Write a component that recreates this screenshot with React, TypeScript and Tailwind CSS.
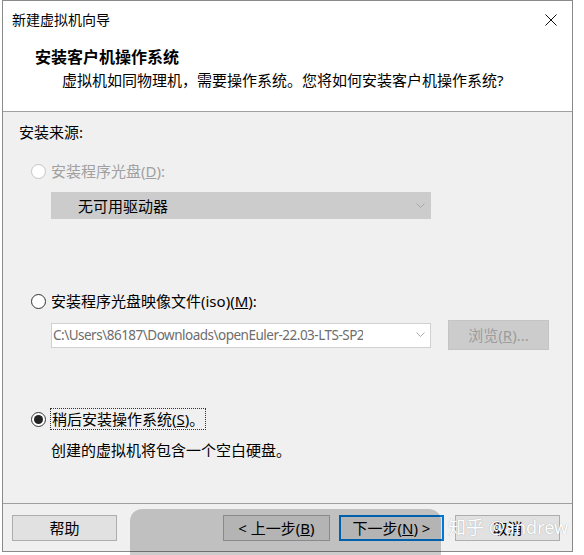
import React from 'react';

const font = { fontFamily: '"Noto Sans", "Noto Sans CJK SC", sans-serif' };

function Radio({ checked = false, disabled = false }: { checked?: boolean; disabled?: boolean }) {
    return (
        <span
            className={`flex h-[15px] w-[15px] shrink-0 items-center justify-center rounded-full border bg-white ${
                disabled ? 'border-[#c4c4c4]' : 'border-[#333333]'
            }`}
        >
            {checked && <span className="h-[9px] w-[9px] rounded-full bg-[#222222]" />}
        </span>
    );
}

function Chevron() {
    return (
        <svg width="9" height="6" viewBox="0 0 9 6" className="shrink-0">
            <polyline points="0.5,0.5 4.5,4.5 8.5,0.5" fill="none" stroke="#a8a8a8" strokeWidth="1" />
        </svg>
    );
}

function Button({ children, focused = false, width }: { children: React.ReactNode; focused?: boolean; width: string }) {
    return (
        <div
            className={`flex h-[26px] items-center justify-center bg-[#e1e1e1] text-[15px] leading-[20px] text-black ${width} ${
                focused ? 'border-2 border-[#0078d7]' : 'border border-[#adadad]'
            }`}
        >
            {children}
        </div>
    );
}

export default function App() {
    return (
        <div className="relative h-[555px] w-[584px] overflow-hidden bg-white" style={font}>
            <div className="ml-[2px] flex h-[552px] w-[571px] flex-col border border-[#8a8a8a] bg-white">
                {/* title bar */}
                <div className="flex h-[38px] shrink-0 items-center justify-between pl-[9px] pr-[15px]">
                    <span className="text-[14px] leading-[20px] text-black">新建虚拟机向导</span>
                    <svg width="12" height="12" viewBox="0 0 12 12">
                        <path d="M0.5 0.5 L11.5 11.5 M11.5 0.5 L0.5 11.5" stroke="#111" strokeWidth="1" />
                    </svg>
                </div>

                {/* header */}
                <div className="h-[72px] shrink-0 pt-[8px]">
                    <div className="pl-[32px] text-[16px] font-bold leading-[20px] text-black">安装客户机操作系统</div>
                    <div className="mt-[3px] pl-[59px] text-[15px] leading-[20px] text-black">
                        虚拟机如同物理机，需要操作系统。您将如何安装客户机操作系统?
                    </div>
                </div>

                <div className="h-px shrink-0 bg-[#a0a0a0]" />

                {/* body */}
                <div className="flex h-[391px] shrink-0 flex-col bg-[#f0f0f0] pl-[16px] pt-[10px] text-[15px] leading-[20px]">
                    <div className="text-black">安装来源:</div>

                    <div className="mt-[19px] flex items-center gap-[5px] pl-[12px]">
                        <Radio disabled />
                        <span className="text-[#a0a0a0]">
                            安装程序光盘(<span className="underline">D</span>):
                        </span>
                    </div>

                    <div className="ml-[32px] mt-[11px] flex h-[27px] w-[380px] items-center justify-between bg-[#cccccc] pl-[27px] pr-[6px]">
                        <span className="text-black">无可用驱动器</span>
                        <Chevron />
                    </div>

                    <div className="mt-[72px] flex items-center gap-[5px] pl-[12px]">
                        <Radio />
                        <span className="text-black">
                            安装程序光盘映像文件(iso)(<span className="underline">M</span>):
                        </span>
                    </div>

                    <div className="ml-[32px] mt-[9px] flex items-center gap-[17px]">
                        <div className="flex h-[25px] w-[380px] items-center justify-between border border-[#d0d0d0] bg-white pl-[1px] pr-[5px]">
                            <div className="w-[310px] overflow-hidden whitespace-nowrap text-[13.5px] tracking-[-0.5px] text-[#6d6d6d]">
                                C:\Users\86187\Downloads\openEuler-22.03-LTS-SP2-x86_64-dvd.iso
                            </div>
                            <Chevron />
                        </div>
                        <div className="flex h-[30px] w-[101px] items-center justify-center border border-[#c4c4c4] bg-[#cccccc] text-[#9c9c9c]">
                            浏览(<span className="underline">R</span>)...
                        </div>
                    </div>

                    <div className="mt-[58px] flex items-center gap-[4px] pl-[12px]">
                        <Radio checked />
                        <span className="border border-dotted border-[#333] px-[1px] text-black">
                            稍后安装操作系统(<span className="underline">S</span>)。
                        </span>
                    </div>

                    <div className="mt-[10px] pl-[32px] text-black">创建的虚拟机将包含一个空白硬盘。</div>
                </div>

                <div className="h-px shrink-0 bg-[#a0a0a0]" />

                {/* footer */}
                <div className="flex flex-1 items-start bg-[#f0f0f0] pl-[9px] pr-[12px] pt-[11px]">
                    <Button width="w-[105px]">帮助</Button>
                    <div className="ml-auto flex">
                        <Button width="w-[107px]">
                            &lt; 上一步(<span className="underline">B</span>)
                        </Button>
                        <div className="ml-[9px]">
                            <Button focused width="w-[105px]">
                                下一步(<span className="underline">N</span>) &gt;
                            </Button>
                        </div>
                        <div className="ml-[11px]">
                            <Button width="w-[105px]">取消</Button>
                        </div>
                    </div>
                </div>
            </div>

            {/* translucent overlay from the screenshot */}
            <div className="absolute left-[130px] top-[509px] h-[50px] w-[311px] rounded-t-[12px] bg-black/20" />

            {/* watermark */}
            <div
                className="absolute left-[448px] top-[515px] whitespace-nowrap text-[18px] leading-[24px] text-white"
                style={{ textShadow: '0 0 1px rgba(0,0,0,0.35)' }}
            >
                知乎 @andrew
            </div>
        </div>
    );
}
